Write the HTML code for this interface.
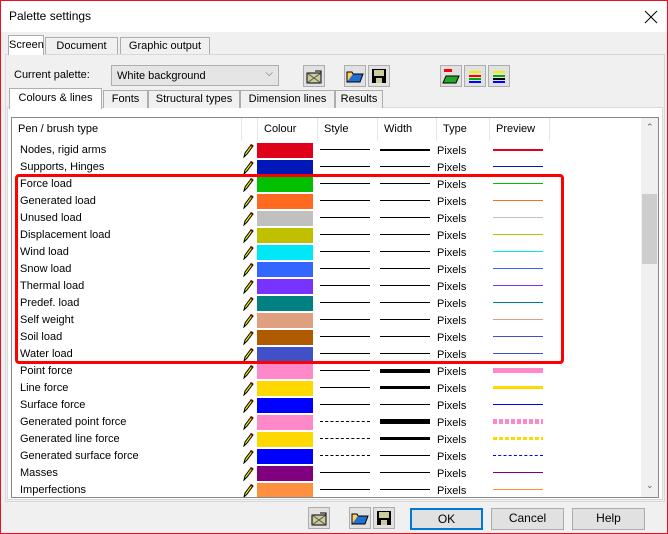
<!DOCTYPE html>
<html><head><meta charset="utf-8"><style>
*{box-sizing:border-box;margin:0;padding:0}
body{width:668px;height:534px;overflow:hidden;font-family:"Liberation Sans",sans-serif;font-size:11px;color:#000;background:#f0f0f0;position:relative}
.win{position:absolute;left:0;top:0;width:668px;height:534px;border:1px solid #e81123;background:#f0f0f0}
.title{position:absolute;left:0;top:0;width:666px;height:31px;background:#fff;font-size:12px}
.a{position:absolute}
.tab{position:absolute;border:1px solid #adadad;border-bottom:none;background:#f0f0f0;text-align:center;line-height:18px;height:19px}
.btn{position:absolute;border:1px solid #adadad;background:#e1e1e1;text-align:center;font-size:12px;line-height:19px}
.ib{position:absolute;border:1px solid #adadad;background:#e1e1e1;width:22px;height:22px}
.row{position:absolute;left:0;width:630px;height:17px}
.row .n{position:absolute;left:8px;top:2px}
.row .p{position:absolute;left:230px;top:1px;width:12px;height:15px}
.row .s{position:absolute;left:245px;top:1px;width:56px;height:15px}
.row .st{position:absolute;left:308px;top:7px;width:50px;border-top:1px solid #000}
.row .w{position:absolute;left:368px;top:7px;width:50px;border-top:1px solid #000}
.row .t{position:absolute;left:425px;top:3px}
.row .pv{position:absolute;left:481px;top:7px;width:50px;border-top:1px solid #000}
.hd{position:absolute;top:0;height:23px;border-right:1px solid #e5e5e5;padding-left:6px;line-height:23px}
</style></head><body>
<div class="win">
<div class="title"><span class="a" style="left:8px;top:8px">Palette settings</span><svg class="a" style="left:643px;top:9px" width="14" height="14"><path d="M1 1L13 13M13 1L1 13" stroke="#000" stroke-width="1"/></svg></div>
<div class="a" style="left:4px;top:53px;width:660px;height:448px;border:1px solid #d9d9d9;"></div>
<div class="tab" style="left:7px;top:34px;width:36px;background:#fff;height:20px;z-index:2">Screen</div>
<div class="tab" style="left:44px;top:36px;width:73px;height:17px;line-height:16px">Document</div>
<div class="tab" style="left:119px;top:36px;width:90px;height:17px;line-height:16px">Graphic output</div>
<div class="a" style="left:13px;top:68px">Current palette:</div>
<div class="a" style="left:110px;top:64px;width:168px;height:21px;border:1px solid #adadad;background:#e5e5e5;padding:4px 5px">White background<span class="a" style="right:5px;top:2px;font-size:10px;color:#555">⌵</span></div>
<div class="ib" style="left:302px;top:64px"><svg width="20" height="20"><rect x="3" y="7" width="14" height="10" fill="#cc9" stroke="#000"/><path d="M3 7l14 10M17 7L3 17" stroke="#555"/><path d="M11 5h6v3" stroke="#000" fill="none"/></svg></div>
<div class="ib" style="left:343px;top:64px"><svg width="20" height="20"><path d="M2 16l3-8h13l-3 8z" fill="#1e6fd0" stroke="#000"/><path d="M2 16V6h5l1 2" stroke="#000" fill="#fc6"/></svg></div>
<div class="ib" style="left:367px;top:64px"><svg width="20" height="20"><rect x="3" y="3" width="14" height="14" fill="#000"/><rect x="5" y="4" width="10" height="6" fill="#cc9"/><rect x="7" y="12" width="6" height="5" fill="#cc9"/></svg></div>
<div class="ib" style="left:439px;top:64px"><svg width="20" height="20"><rect x="3" y="3" width="8" height="3" fill="red"/><path d="M2 17l3-7h13l-3 7z" fill="#2a2" stroke="#000"/></svg></div>
<div class="ib" style="left:463px;top:64px"><svg width="20" height="20"><rect x="4" y="5" width="12" height="2" fill="#ee0"/><rect x="4" y="9" width="12" height="2" fill="red"/><rect x="4" y="12" width="12" height="2" fill="#0a0"/><rect x="4" y="15" width="12" height="2" fill="#00f"/></svg></div>
<div class="ib" style="left:487px;top:64px"><svg width="20" height="20"><rect x="4" y="5" width="12" height="2" fill="#ee0"/><rect x="4" y="9" width="12" height="2" fill="#0a0"/><rect x="4" y="12" width="12" height="2" fill="#000"/><rect x="4" y="15" width="12" height="2" fill="#00f"/></svg></div>
<div class="a" style="left:6px;top:106px;width:656px;height:393px;border:1px solid #d9d9d9;background:#fff"></div>
<div class="tab" style="left:8px;top:87px;width:93px;height:21px;background:#fff;z-index:2">Colours &amp; lines</div>
<div class="tab" style="left:102px;top:89px;width:45px;height:18px;line-height:17px">Fonts</div>
<div class="tab" style="left:147px;top:89px;width:92px;height:18px;line-height:17px">Structural types</div>
<div class="tab" style="left:239px;top:89px;width:95px;height:18px;line-height:17px">Dimension lines</div>
<div class="tab" style="left:334px;top:89px;width:48px;height:18px;line-height:17px">Results</div>
<div class="a" style="left:10px;top:116px;width:648px;height:381px;border:1px solid #828790;background:#fff;overflow:hidden">
 <div class="hd" style="left:0;width:230px">Pen / brush type</div>
 <div class="hd" style="left:230px;width:16px"></div>
 <div class="hd" style="left:246px;width:60px">Colour</div>
 <div class="hd" style="left:306px;width:60px">Style</div>
 <div class="hd" style="left:366px;width:59px">Width</div>
 <div class="hd" style="left:425px;width:53px">Type</div>
 <div class="hd" style="left:478px;width:60px">Preview</div>
 <div class="a" style="left:629px;top:0;width:17px;height:379px;background:#f0f0f0"></div>
 <div class="a" style="left:634px;top:4px;font-size:9px;color:#606060">⌃</div>
 <div class="a" style="left:634px;top:362px;font-size:9px;color:#606060">⌄</div>
 <div class="a" style="left:630px;top:76px;width:15px;height:70px;background:#cdcdcd"></div>
 <div id="rows"></div>
</div>
<div class="a" style="left:14px;top:173px;width:549px;height:190px;border:3px solid #f00;border-radius:4px"></div>
<div class="ib" style="left:307px;top:506px"><svg width="20" height="20"><rect x="3" y="7" width="14" height="10" fill="#cc9" stroke="#000"/><path d="M3 7l14 10M17 7L3 17" stroke="#555"/><path d="M11 5h6v3" stroke="#000" fill="none"/></svg></div>
<div class="ib" style="left:348px;top:506px"><svg width="20" height="20"><path d="M2 16l3-8h13l-3 8z" fill="#1e6fd0" stroke="#000"/><path d="M2 16V6h5l1 2" stroke="#000" fill="#fc6"/></svg></div>
<div class="ib" style="left:372px;top:506px"><svg width="20" height="20"><rect x="3" y="3" width="14" height="14" fill="#000"/><rect x="5" y="4" width="10" height="6" fill="#cc9"/><rect x="7" y="12" width="6" height="5" fill="#cc9"/></svg></div>
<div class="btn" style="left:409px;top:507px;width:73px;height:22px;border:2px solid #0078d7;line-height:18px">OK</div>
<div class="btn" style="left:490px;top:507px;width:73px;height:22px">Cancel</div>
<div class="btn" style="left:571px;top:507px;width:73px;height:22px">Help</div>
</div>
<script>
var P='<svg width="12" height="15"><path d="M2 14l1-4 6-8 2 1-6 8z" fill="#ee0" stroke="#000" stroke-width="1"/><path d="M8 2l1-1 2 1-1 2z" fill="#800"/></svg>';
var d=[["Nodes, rigid arms","#e0001a","","2px solid #000","2px solid #e0001a"],
["Supports, Hinges","#0018b8","","","1px solid #0018b8"],
["Force load","#00c000","","","1px solid #00c000"],
["Generated load","#ff6a20","","","1px solid #ff6a20"],
["Unused load","#c0c0c0","","","1px solid #c0c0c0"],
["Displacement load","#c0c000","","","1px solid #c0c000"],
["Wind load","#00e8f8","","","1px solid #00e8f8"],
["Snow load","#3366ff","","","1px solid #3366ff"],
["Thermal load","#7733ff","","","1px solid #7733ff"],
["Predef. load","#008080","","","1px solid #008080"],
["Self weight","#e0a080","","","1px solid #e0a080"],
["Soil load","#b05a00","","","1px solid #4050c8"],
["Water load","#4050c8","","","1px solid #4050c8"],
["Point force","#ff88c8","","4px solid #000","5px solid #ff88c8"],
["Line force","#ffd800","","3px solid #000","3px solid #ffd800"],
["Surface force","#0000ff","","","1px solid #0000ff"],
["Generated point force","#ff88c8","1px dashed #000","5px solid #000","D5#ff88c8"],
["Generated line force","#ffd800","1px dashed #000","3px solid #000","D3#ffd800"],
["Generated surface force","#0000ff","1px dashed #000","","1px dashed #0000ff"],
["Masses","#800080","","","1px solid #800080"],
["Imperfections","#ff9040","","","1px solid #ff9040"]];
var h='';d.forEach(function(r,i){var wt=r[3]?'style="border-top:'+r[3]+';top:'+(8-parseInt(r[3])/2|0)+'px"':'';
var pt;
if(r[4][0]=='D'){var t=+r[4][1],c=r[4].slice(2);pt='style="border:none;height:'+t+'px;top:'+(8-t/2|0)+'px;background:repeating-linear-gradient(90deg,'+c+' 0 4px,transparent 4px 6px)"';}
else pt='style="border-top:'+r[4]+';top:'+(8-parseInt(r[4])/2|0)+'px"';
h+='<div class="row" style="top:'+(24+17*i)+'px"><span class="n">'+r[0]+'</span><span class="p">'+P+'</span><span class="s" style="background:'+r[1]+'"></span><span class="st" '+(r[2]?'style="border-top:'+r[2]+'"':'')+'></span><span class="w" '+wt+'></span><span class="t">Pixels</span><span class="pv" '+pt+'></span></div>';});
document.getElementById('rows').innerHTML=h;
</script>
</body></html>
